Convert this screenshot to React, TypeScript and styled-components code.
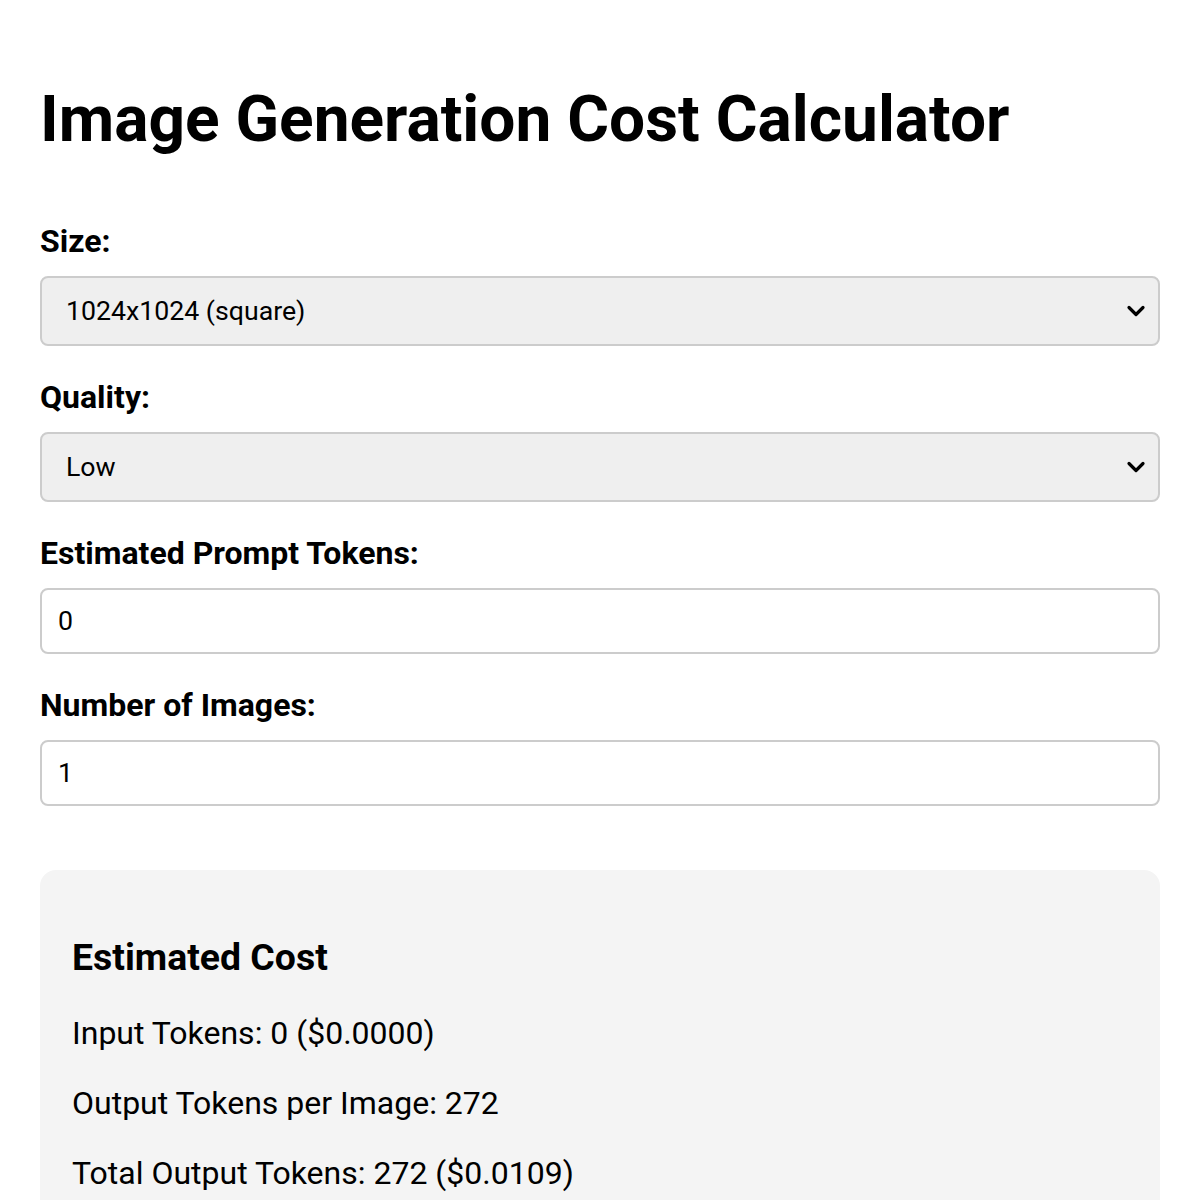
import React, { useState } from "react";
import styled, { createGlobalStyle } from "styled-components";

const Global = createGlobalStyle`
  body { margin: 0; background: #fff; font-family: Roboto, "Liberation Sans", sans-serif; color: #000; }
`;

const Page = styled.div`
  padding: 0 40px;
`;

const Title = styled.h1`
  font-size: 64px;
  font-weight: 700;
  margin: 0;
  padding-top: 82px;
  line-height: 76px;
`;

const Form = styled.div`
  display: flex;
  flex-direction: column;
  margin-top: 64px;
`;

const Label = styled.label`
  display: block;
  font-size: 32px;
  font-weight: 700;
  line-height: 38px;
  margin-bottom: 16px;
`;

const Field = styled.div`
  margin-bottom: 32px;
`;

const chevron = encodeURIComponent(
  `<svg xmlns="http://www.w3.org/2000/svg" width="20" height="14" viewBox="0 0 20 14"><path d="M3 3.5l7 7 7-7" fill="none" stroke="#000" stroke-width="3.2" stroke-linecap="round" stroke-linejoin="round"/></svg>`
);

const Select = styled.select`
  appearance: none;
  width: 100%;
  height: 70px;
  border: 2px solid #ccc;
  border-radius: 8px;
  background: #efefef url("data:image/svg+xml,${chevron}") no-repeat right 12px center;
  font-family: Roboto, "Liberation Sans", sans-serif;
  font-size: 26.7px;
  padding: 0 40px 0 24px;
  color: #000;
`;

const Input = styled.input`
  box-sizing: border-box;
  width: 100%;
  height: 66px;
  border: 2px solid #ccc;
  border-radius: 8px;
  background: #fff;
  font-family: Roboto, "Liberation Sans", sans-serif;
  font-size: 26.7px;
  padding: 0 16px;
  color: #000;
`;

const Result = styled.div`
  margin-top: 32px;
  background: #f4f4f4;
  border-radius: 16px;
  padding: 64px 32px 32px;
`;

const ResultTitle = styled.h2`
  font-size: 37.4px;
  font-weight: 700;
  margin: 0 0 34px;
  line-height: 46px;
`;

const Line = styled.p`
  font-size: 32px;
  margin: 0 0 32px;
  line-height: 38px;
`;

export default function App() {
  const [size, setSize] = useState("1024x1024");
  const [quality, setQuality] = useState("low");
  const [prompt, setPrompt] = useState("0");
  const [count, setCount] = useState("1");
  return (
    <Page>
      <Global />
      <Title>Image Generation Cost Calculator</Title>
      <Form>
        <Field>
          <Label>Size:</Label>
          <Select value={size} onChange={(e) => setSize(e.target.value)}>
            <option value="1024x1024">1024x1024 (square)</option>
            <option value="1024x1536">1024x1536 (portrait)</option>
            <option value="1536x1024">1536x1024 (landscape)</option>
          </Select>
        </Field>
        <Field>
          <Label>Quality:</Label>
          <Select value={quality} onChange={(e) => setQuality(e.target.value)}>
            <option value="low">Low</option>
            <option value="medium">Medium</option>
            <option value="high">High</option>
          </Select>
        </Field>
        <Field>
          <Label>Estimated Prompt Tokens:</Label>
          <Input type="text" value={prompt} onChange={(e) => setPrompt(e.target.value)} />
        </Field>
        <Field>
          <Label>Number of Images:</Label>
          <Input type="text" value={count} onChange={(e) => setCount(e.target.value)} />
        </Field>
      </Form>
      <Result>
        <ResultTitle>Estimated Cost</ResultTitle>
        <Line>Input Tokens: 0 ($0.0000)</Line>
        <Line>Output Tokens per Image: 272</Line>
        <Line>Total Output Tokens: 272 ($0.0109)</Line>
      </Result>
    </Page>
  );
}
